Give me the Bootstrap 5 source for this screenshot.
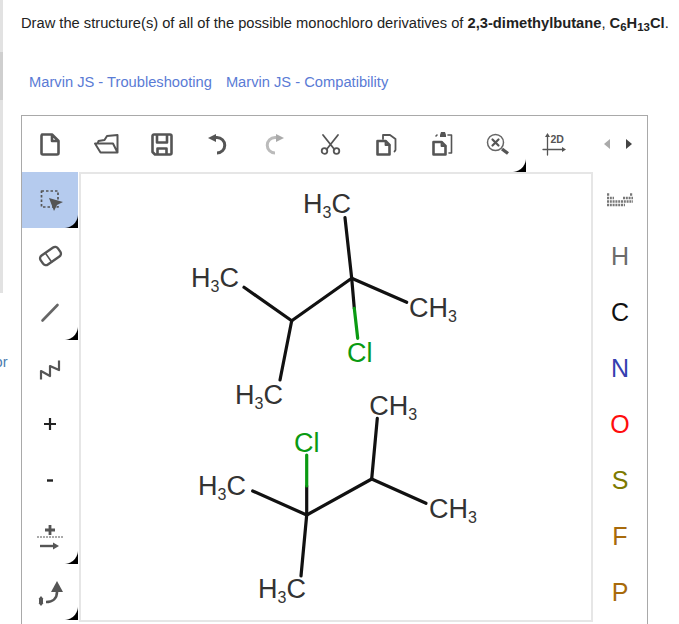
<!DOCTYPE html>
<html lang="en"><head><meta charset="utf-8"><title>Marvin JS</title>
<link href="https://cdn.jsdelivr.net/npm/bootstrap@5.3.0/dist/css/bootstrap.min.css" rel="stylesheet">
<style>
html,body{height:624px;overflow:hidden;background:#fff}
body{font-family:"Liberation Sans",Arial,sans-serif;color:#222}
.gutter{width:21px;flex:none}
.rail{height:293px;width:3px;background:linear-gradient(#e2e2e2 0 52px,#cfcfcf 52px 100px,#e2e2e2 100px)}
.orword{margin-top:60px;margin-left:-5.5px;font-size:14.7px;line-height:18px;color:#4a7db0}
.question{font-size:14.7px;line-height:20px;padding-top:13px;margin:0;white-space:nowrap}
.question sub{font-size:11.5px;bottom:-.3em;line-height:0}
.linkrow{padding:39px 0 0 8px;font-size:14.7px;line-height:20px;gap:14px;height:82px}
.linkrow a{color:#5a7bd5;text-decoration:none}
.frame{width:627px;height:560px;border:1px solid #a9a9a9;border-bottom:0}
.toolcell{width:56px;height:56px;flex:none;position:relative;display:flex;align-items:center;justify-content:center}
.toolcell svg{display:block;overflow:visible}
.cornered::after{content:"";position:absolute;right:0;bottom:0;width:14px;height:14px;background:radial-gradient(circle at 0 0,transparent 13.5px,#000 14.5px)}
.picked{background:#b5cbee}
.nudge-sel{margin-left:4px}
.nudge-down{margin-top:3px}
.topbar{height:56px}
.sidecol{width:57px;flex:none}
.canvas{width:514px;height:450px;flex:none;border:2px solid #e6e6e6;background:#fff}
.elemcol .toolcell{width:54px}
.elem{font-size:25px;line-height:56px}
.mol text{font-family:"Liberation Sans",Arial,sans-serif;font-size:27px;fill:#333}
.mol .sb{font-size:16px}
.mol .cl{fill:#0a9a12}
.mol line{stroke:#111;stroke-width:3.2;stroke-linecap:round}
.mol line.g{stroke:#0a9a12}
.ic{fill:none;stroke:#555;stroke-width:2.6;stroke-linejoin:round;stroke-linecap:round}
.ft{fill:#555;stroke:none}
</style></head>
<body class="m-0">
<div class="d-flex">
  <div class="gutter">
    <div class="rail"></div>
    <div class="orword">or</div>
  </div>
  <div class="flex-grow-1">
    <p class="question">Draw the structure(s) of all of the possible monochloro derivatives of <b>2,3-dimethylbutane</b>, <b>C<sub>6</sub>H<sub>13</sub>Cl</b>.</p>
    <div class="linkrow d-flex"><a href="#">Marvin JS - Troubleshooting</a><a href="#">Marvin JS - Compatibility</a></div>
    <div class="frame">
      <div class="topbar d-flex">
        <div class="toolcell"><svg width="20" height="23" viewBox="0 0 20 23"><path class="ic" d="M2 1.500h10l6.500 6.500v12a1.500 1.500 0 0 1-1.500 1.500H3a1.500 1.500 0 0 1-1.500-1.500V3zM12 1.500v6.500h6.500"/></svg></div>
        <div class="toolcell"><svg width="24" height="20" viewBox="0 0 24 20"><path class="ic" style="stroke-width:2" d="M1 9.500h18l4.500 9H6.500zM3.500 9.500L4.500 7l6-1L13 2l10.500-1v17.500"/></svg></div>
        <div class="toolcell"><svg width="22" height="23" viewBox="0 0 22 23"><path class="ic" d="M1.500 3a1.500 1.500 0 0 1 1.500-1.500h16a1.500 1.500 0 0 1 1.500 1.500v17a1.500 1.500 0 0 1-1.500 1.500H4l-2.500-2.500zM6 1.500v8h10v-8M6.500 21.500v-6h9v6"/></svg></div>
        <div class="toolcell"><svg width="20" height="20" viewBox="0 0 20 20"><path class="ic" style="stroke-width:3;stroke-linecap:butt" d="M7 3.500h2a7.700 7.700 0 0 1 0 15.500"/><path class="ft" d="M0 4l8-4v8z"/></svg></div>
        <div class="toolcell"><svg width="20" height="20" viewBox="0 0 20 20"><path class="ic" style="stroke:#bbb;stroke-width:3;stroke-linecap:butt" d="M13 3.500h-2a7.700 7.700 0 0 0 0 15.500"/><path class="ft" style="fill:#aaa" d="M20 4l-8-4v8z"/></svg></div>
        <div class="toolcell"><svg width="21" height="21" viewBox="0 0 21 21"><path class="ic" style="stroke-width:1.800" d="M3 1l11.500 14.500M18 1L6.500 15.500"/><circle class="ic" style="stroke-width:1.800" cx="4.500" cy="17" r="2.800"/><circle class="ic" style="stroke-width:1.800" cx="16.500" cy="17" r="2.800"/></svg></div>
        <div class="toolcell"><svg width="21" height="23" viewBox="0 0 21 23"><path class="ic" style="stroke-width:1.800" d="M7 6V2h7l5.500 4v11l-1 1.500"/><path class="ic" d="M1.500 8h8l4 4v9.500h-12z"/><path class="ic" style="stroke-width:1.800" d="M9.500 8v4h4"/></svg></div>
        <div class="toolcell"><svg width="21" height="24" viewBox="0 0 21 24"><path class="ic" style="stroke-width:1.600" d="M4 4l1-1M16 3h3.500v18H17"/><path class="ft" d="M8 3l1-3h4l1 3v2H8z"/><path class="ic" d="M1.500 10h8l4 4v8.500h-12z"/><path class="ic" style="stroke-width:1.800" d="M9.500 10v4h4"/></svg></div>
        <div class="toolcell cornered"><svg width="22" height="20" viewBox="0 0 22 20"><circle class="ic" style="stroke-width:1.500;stroke:#666" cx="8.500" cy="8.500" r="8"/><path class="ic" style="stroke-width:2.200" d="M5.500 5.500l6 6M11.500 5.500l-6 6"/><path class="ic" style="stroke-width:3.400;stroke-linecap:butt" d="M15 15l6 4.500"/></svg></div>
        <div class="toolcell"><svg width="24" height="23" viewBox="0 0 24 23"><path class="ic" style="stroke-width:1.300" d="M5.500 3v19M1 16.500h20"/><path class="ft" d="M5.500 0l2.500 4H3zM24 16.500l-4-2.500v5z"/><text x="8.500" y="10" style="font-family:'Liberation Sans',Arial,sans-serif;font-weight:700;font-size:10.500px;fill:#555">2D</text></svg></div>
        <div class="d-flex align-items-center" style="gap:16px;margin-left:22px"><svg width="6" height="10" viewBox="0 0 6 10"><path d="M6 0L0 5l6 5z" fill="#aaa"/></svg><svg width="6" height="10" viewBox="0 0 6 10"><path d="M0 0l6 5-6 5z" fill="#444"/></svg></div>
      </div>
      <div class="d-flex">
        <div class="sidecol">
          <div class="toolcell picked cornered"><svg class="nudge-sel" width="22" height="20" viewBox="0 0 22 20"><path class="ic" style="stroke-width:1.700;stroke-dasharray:2.500 2;stroke-linecap:butt" d="M.5 1H17v16H.5z"/><path class="ft" d="M8 8l14 4-6 3-3 6z"/></svg></div>
          <div class="toolcell"><svg width="21" height="20" viewBox="0 0 21 20"><g transform="rotate(-35 10.500 10)"><rect class="ic" style="stroke-width:2.400" x="0" y="4.500" width="21" height="11" rx="3.500"/><path class="ic" style="stroke-width:1.600" d="M8 4.500v11"/></g></svg></div>
          <div class="toolcell cornered"><svg width="18" height="19" viewBox="0 0 18 19"><path style="stroke:#666" class="ic" d="M1.500 17.500L16.500 2"/></svg></div>
          <div class="toolcell"><svg class="nudge-down" width="20" height="20" viewBox="0 0 20 20"><path class="ic" style="stroke-width:2.200;stroke-linecap:butt" d="M1 19.500V11l9 5V6l9 4V.5"/></svg></div>
          <div class="toolcell"><svg width="12" height="12" viewBox="0 0 12 12"><path d="M6 0v12M0 6h12" stroke="#222" stroke-width="2.200"/></svg></div>
          <div class="toolcell"><svg width="6" height="3" viewBox="0 0 6 3"><path d="M0 1.500h6" stroke="#222" stroke-width="2.400"/></svg></div>
          <div class="toolcell cornered"><svg class="nudge-down" width="26" height="25" viewBox="0 0 26 25"><path d="M13 0v10M8 5h10" stroke="#555" stroke-width="2.800"/><path d="M0 12h26" stroke="#555" stroke-width="1" stroke-dasharray="2 1"/><path d="M3 21h14" stroke="#555" stroke-width="2.400"/><path class="ft" d="M22 21l-6-3.500v7z"/></svg></div>
          <div class="toolcell cornered"><svg class="nudge-down" width="25" height="25" viewBox="0 0 25 25"><path class="ic" style="stroke-width:2.600;stroke-linecap:butt" d="M8 21c7 0 11-4 11-10"/><path class="ft" d="M19 0l6 11H13z"/><path class="ft" d="M3 15l2.500 3h-5zM3 25l2.500-3h-5z"/><rect class="ft" x="1" y="18" width="4" height="4"/></svg></div>
        </div>
        <div class="canvas">
          <svg class="mol d-block" width="510" height="446" viewBox="81 174 510 446">
            <line x1="351.700" y1="278.300" x2="345" y2="217.700"/>
            <line x1="351.700" y1="278.300" x2="406.700" y2="302.300"/>
            <line x1="351.700" y1="278.300" x2="354.300" y2="308.300"/>
            <line class="g" x1="354.300" y1="308.300" x2="357.700" y2="338.300"/>
            <line x1="351.700" y1="278.300" x2="291.700" y2="320.700"/>
            <line x1="291.700" y1="320.700" x2="244" y2="287.300"/>
            <line x1="291.700" y1="320.700" x2="280" y2="380"/>
            <text x="303" y="213">H<tspan class="sb" dy="5">3</tspan><tspan dy="-5">C</tspan></text>
            <text x="191" y="287">H<tspan class="sb" dy="5">3</tspan><tspan dy="-5">C</tspan></text>
            <text x="409" y="317">CH<tspan class="sb" dy="5">3</tspan></text>
            <text class="cl" x="347" y="362">Cl</text>
            <text x="235" y="404">H<tspan class="sb" dy="5">3</tspan><tspan dy="-5">C</tspan></text>
            <line x1="306.700" y1="515" x2="306.700" y2="486"/>
            <line class="g" x1="306.700" y1="486" x2="306.700" y2="455"/>
            <line x1="306.700" y1="515" x2="252.700" y2="491"/>
            <line x1="306.700" y1="515" x2="301" y2="576"/>
            <line x1="306.700" y1="515" x2="371.700" y2="479"/>
            <line x1="371.700" y1="479" x2="377.300" y2="418.300"/>
            <line x1="371.700" y1="479" x2="426" y2="503.300"/>
            <text class="cl" x="294" y="451.700">Cl</text>
            <text x="369.300" y="415">CH<tspan class="sb" dy="5">3</tspan></text>
            <text x="198" y="495">H<tspan class="sb" dy="5">3</tspan><tspan dy="-5">C</tspan></text>
            <text x="429" y="518">CH<tspan class="sb" dy="5">3</tspan></text>
            <text x="258" y="598">H<tspan class="sb" dy="5">3</tspan><tspan dy="-5">C</tspan></text>
          </svg>
        </div>
        <div class="sidecol elemcol flex-grow-1 text-center">
          <div class="toolcell"><svg width="26" height="14" viewBox="0 0 26 14"><path d="M0 1.500h3M23 1.500h3M0 5h7M16 5h10M0 8.500h26M0 12h18" fill="none" stroke="#777" stroke-width="2.600" stroke-dasharray="2 .8"/></svg></div>
          <div class="toolcell elem" style="color:#6b6b6b">H</div>
          <div class="toolcell elem" style="color:#111">C</div>
          <div class="toolcell elem" style="color:#3440b0">N</div>
          <div class="toolcell elem" style="color:#ff0d0d">O</div>
          <div class="toolcell elem" style="color:#7d7a00">S</div>
          <div class="toolcell elem" style="color:#a86a0a">F</div>
          <div class="toolcell elem" style="color:#a86a0a">P</div>
        </div>
      </div>
    </div>
  </div>
</div>
</body></html>
